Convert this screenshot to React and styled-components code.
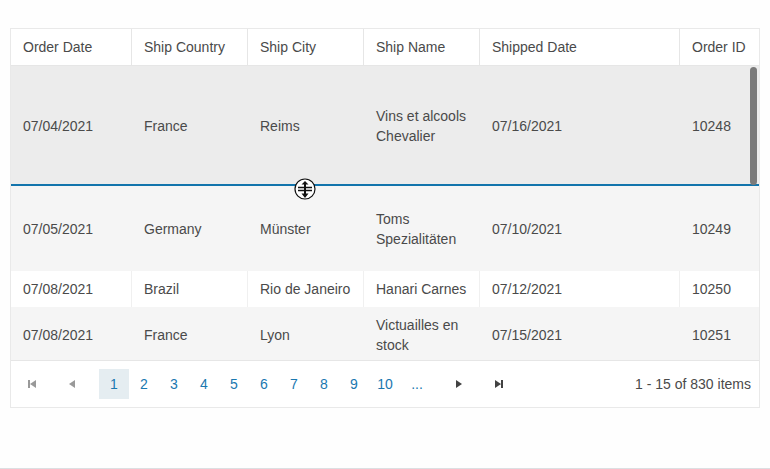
import React from "react";
import styled, { createGlobalStyle } from "styled-components";

const Global = createGlobalStyle`
  html, body {
    margin: 0;
    background: #fefefe;
  }
  * {
    box-sizing: border-box;
  }
`;

const Page = styled.div`
  width: 770px;
  height: 469px;
  padding: 28px 10px 0;
  border-bottom: 1px solid #dcdfe2;
  overflow: hidden;
  font-family: "Liberation Sans", Arial, sans-serif;
  font-size: 14px;
  line-height: 20px;
  color: #4a4a4a;
`;

const Grid = styled.div`
  width: 750px;
  border: 1px solid #e9e9e9;
  background: #fff;
`;

const Row = styled.div`
  display: grid;
  grid-template-columns: 121px 116px 116px 116px 200px 79px;
  height: ${(p) => p.$height}px;
  background: ${(p) => p.$bg || "#fff"};
`;

const HeaderRow = styled(Row)`
  border-bottom: 1px solid #e6e6e6;
`;

const HeaderCell = styled.div`
  display: flex;
  align-items: center;
  padding: 0 12px;
  white-space: nowrap;
  border-right: 1px solid #e6e6e6;
  &:last-child {
    border-right: 0;
  }
`;

const Cell = styled.div`
  display: flex;
  align-items: center;
  padding: 0 12px;
  border-right: 1px solid ${(p) => (p.$lined ? "#f0f0f0" : "transparent")};
  &:last-child {
    border-right: 0;
  }
`;

/* the last row runs on under the pager, as in a scrolled grid */
const Body = styled.div`
  position: relative;
  height: 294px;
  overflow: hidden;
`;

const ResizeLine = styled.div`
  position: absolute;
  left: 0;
  right: 0;
  top: 118px;
  height: 2px;
  background: #1274ac;
`;

const Scrollbar = styled.div`
  position: absolute;
  left: 739px;
  top: 1px;
  width: 7px;
  height: 118px;
  border-radius: 4px;
  background: #7a7a7a;
`;

const CursorIcon = styled.svg`
  position: absolute;
  left: 283px;
  top: 112px;
  width: 22px;
  height: 22px;
`;

const Pager = styled.div`
  display: flex;
  align-items: center;
  height: 47px;
  padding-right: 8px;
  border-top: 1px solid #e6e6e6;
  background: #fff;
`;

const NavButton = styled.div`
  display: flex;
  align-items: center;
  justify-content: center;
  width: 40px;
  height: 30px;
  color: ${(p) => (p.$disabled ? "#999" : "#424242")};
`;

const Numbers = styled.div`
  display: flex;
  margin: 0 6px 0 8px;
`;

const PageNumber = styled.div`
  width: ${(p) => (p.$wide ? 32 : 30)}px;
  height: 30px;
  display: flex;
  align-items: center;
  justify-content: center;
  color: #1a78b0;
  background: ${(p) => (p.$active ? "#e5edf1" : "transparent")};
`;

const PagerInfo = styled.div`
  margin-left: auto;
`;

const columns = ["Order Date", "Ship Country", "Ship City", "Ship Name", "Shipped Date", "Order ID"];

const rows = [
  { height: 120, bg: "#ececec", cells: ["07/04/2021", "France", "Reims", "Vins et alcools Chevalier", "07/16/2021", "10248"] },
  { height: 85, bg: "#f5f5f5", cells: ["07/05/2021", "Germany", "Münster", "Toms Spezialitäten", "07/10/2021", "10249"] },
  { height: 36, bg: "#fff", lined: true, cells: ["07/08/2021", "Brazil", "Rio de Janeiro", "Hanari Carnes", "07/12/2021", "10250"] },
  { height: 56, bg: "#f5f5f5", cells: ["07/08/2021", "France", "Lyon", "Victuailles en stock", "07/15/2021", "10251"] },
];

const pages = ["1", "2", "3", "4", "5", "6", "7", "8", "9", "10", "..."];

const Icon = ({ children }) => (
  <svg width="10" height="10" viewBox="0 0 10 10" fill="currentColor">
    {children}
  </svg>
);

export default function App() {
  return (
    <Page>
      <Global />
      <Grid>
        <HeaderRow $height={37}>
          {columns.map((c) => (
            <HeaderCell key={c}>{c}</HeaderCell>
          ))}
        </HeaderRow>
        <Body>
          {rows.map((r) => (
            <Row key={r.cells[5]} $height={r.height} $bg={r.bg}>
              {r.cells.map((c) => (
                <Cell key={c} $lined={r.lined}>
                  {c}
                </Cell>
              ))}
            </Row>
          ))}
          <ResizeLine />
          <Scrollbar />
          <CursorIcon viewBox="0 0 22 22">
            <circle cx="11" cy="11" r="10" fill="#fff" stroke="#111" strokeWidth="1.2" />
            <path d="M4 9.5h14M4 12.5h14" stroke="#111" strokeWidth="1.7" />
            <path d="M11 3l3.5 3.5H12v9h2.5L11 20l-3.5-4.5H10v-9H7.5z" fill="#111" />
          </CursorIcon>
        </Body>
        <Pager>
          <NavButton $disabled>
            <Icon>
              <path d="M2 1h2v8H2zM10 1v8L4 5z" />
            </Icon>
          </NavButton>
          <NavButton $disabled>
            <Icon>
              <path d="M9 1v8L3 5z" />
            </Icon>
          </NavButton>
          <Numbers>
            {pages.map((n, i) => (
              <PageNumber key={n} $active={i === 0} $wide={n.length > 1}>
                {n}
              </PageNumber>
            ))}
          </Numbers>
          <NavButton>
            <Icon>
              <path d="M2 1v8l6-4z" />
            </Icon>
          </NavButton>
          <NavButton>
            <Icon>
              <path d="M1 1v8l6-4zM7 1h2v8H7z" />
            </Icon>
          </NavButton>
          <PagerInfo>1 - 15 of 830 items</PagerInfo>
        </Pager>
      </Grid>
    </Page>
  );
}
